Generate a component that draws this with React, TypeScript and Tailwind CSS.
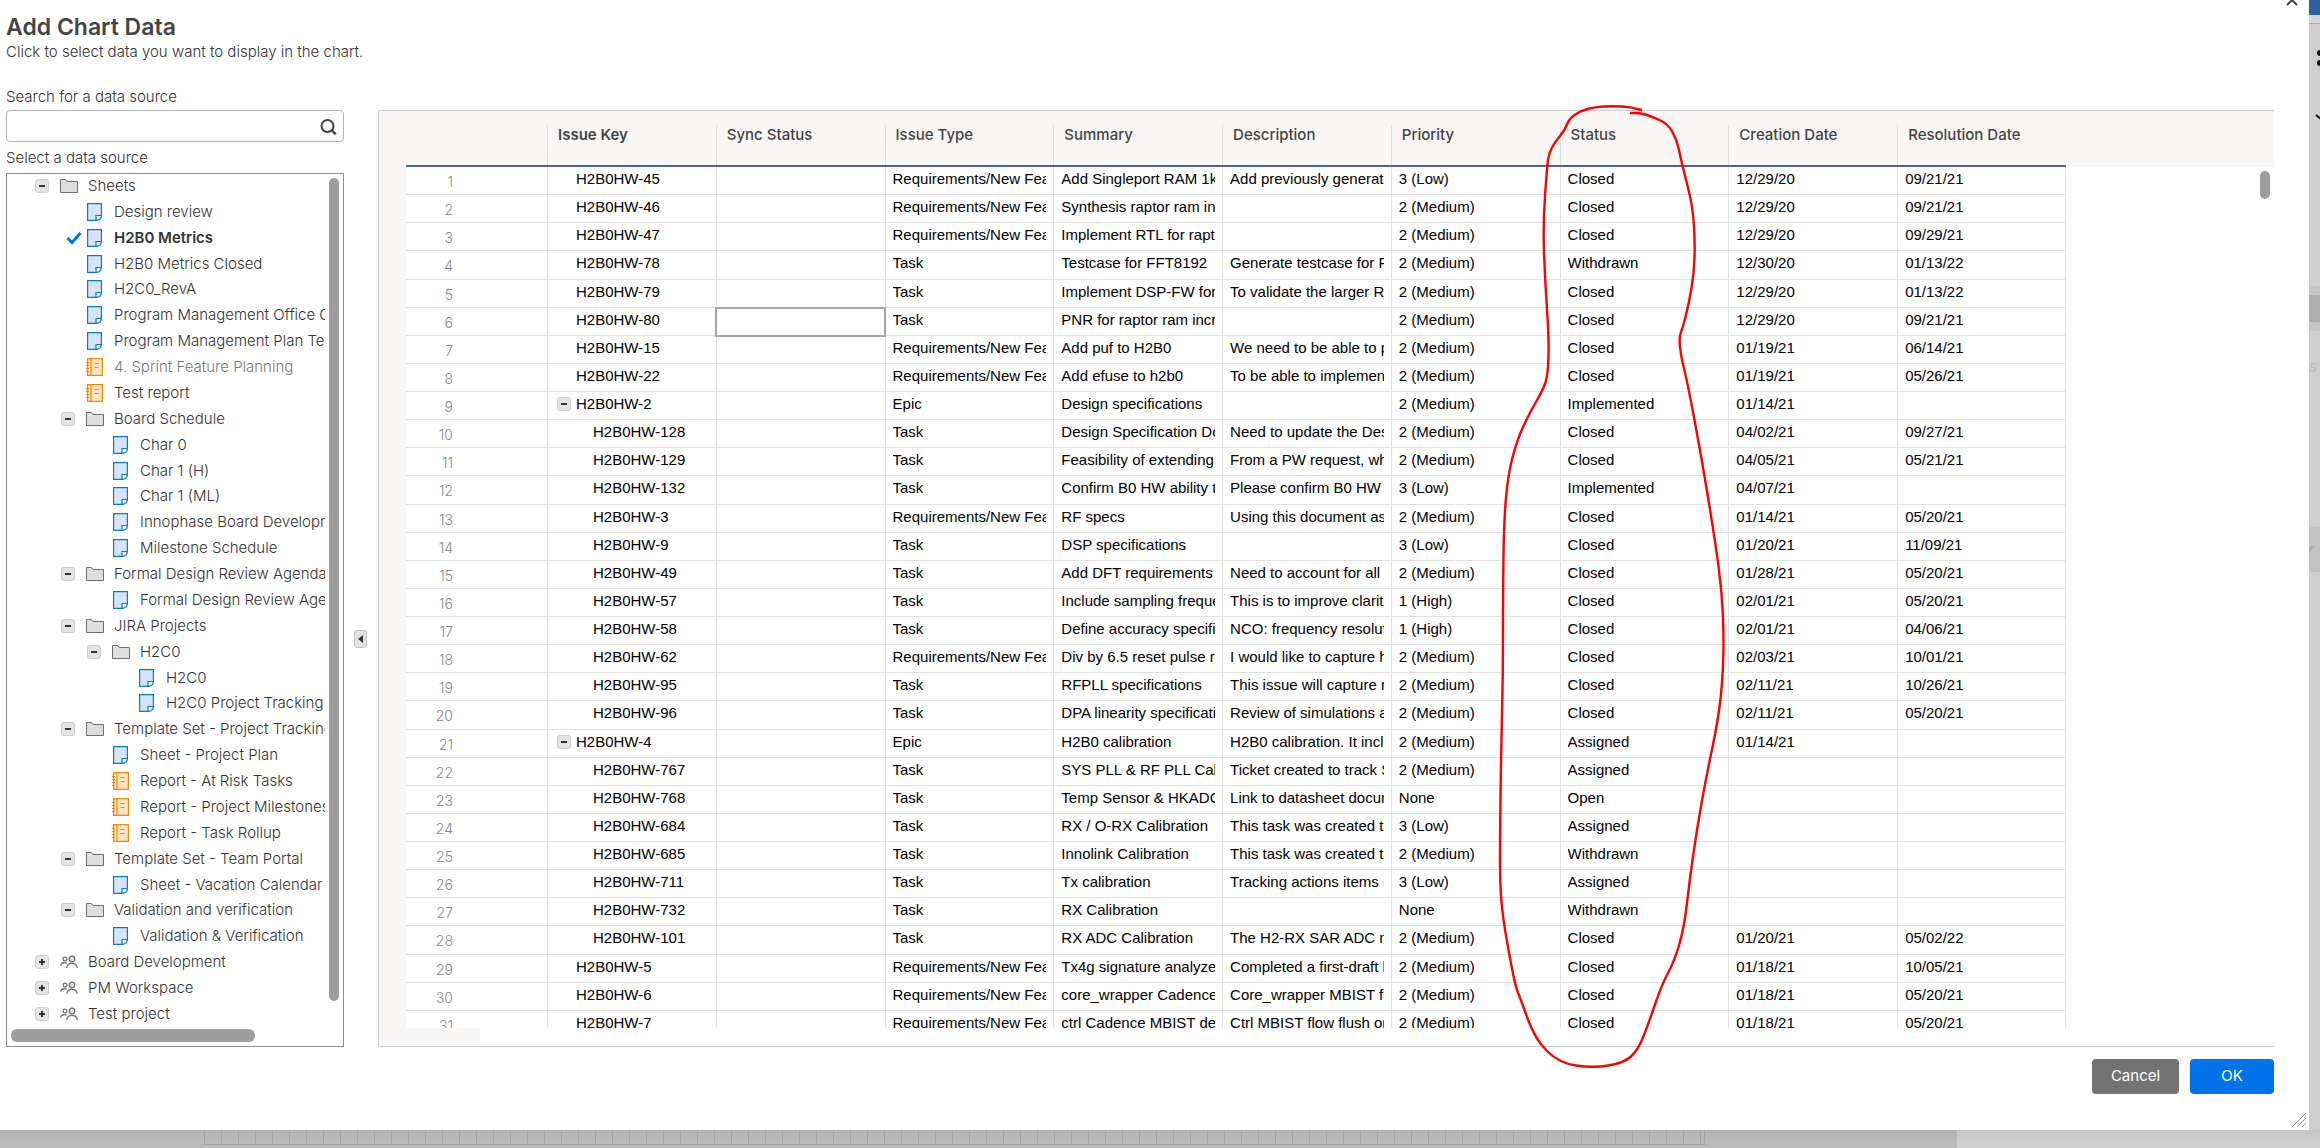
import { useState } from "react";

type Kind = "folder" | "sheet" | "report" | "workspace";

const TREE: { label: string; kind: Kind; level: number; muted?: boolean }[] = [
    { label: "Sheets", kind: "folder", level: 0 },
    { label: "Design review", kind: "sheet", level: 1 },
    { label: "H2B0 Metrics", kind: "sheet", level: 1 },
    { label: "H2B0 Metrics Closed", kind: "sheet", level: 1 },
    { label: "H2C0_RevA", kind: "sheet", level: 1 },
    { label: "Program Management Office C", kind: "sheet", level: 1 },
    { label: "Program Management Plan Tem", kind: "sheet", level: 1 },
    { label: "4. Sprint Feature Planning", kind: "report", level: 1, muted: true },
    { label: "Test report", kind: "report", level: 1 },
    { label: "Board Schedule", kind: "folder", level: 1 },
    { label: "Char 0", kind: "sheet", level: 2 },
    { label: "Char 1 (H)", kind: "sheet", level: 2 },
    { label: "Char 1 (ML)", kind: "sheet", level: 2 },
    { label: "Innophase Board Developm", kind: "sheet", level: 2 },
    { label: "Milestone Schedule", kind: "sheet", level: 2 },
    { label: "Formal Design Review Agenda", kind: "folder", level: 1 },
    { label: "Formal Design Review Agen", kind: "sheet", level: 2 },
    { label: "JIRA Projects", kind: "folder", level: 1 },
    { label: "H2C0", kind: "folder", level: 2 },
    { label: "H2C0", kind: "sheet", level: 3 },
    { label: "H2C0 Project Tracking", kind: "sheet", level: 3 },
    { label: "Template Set - Project Tracking", kind: "folder", level: 1 },
    { label: "Sheet - Project Plan", kind: "sheet", level: 2 },
    { label: "Report - At Risk Tasks", kind: "report", level: 2 },
    { label: "Report - Project Milestones", kind: "report", level: 2 },
    { label: "Report - Task Rollup", kind: "report", level: 2 },
    { label: "Template Set - Team Portal", kind: "folder", level: 1 },
    { label: "Sheet - Vacation Calendar", kind: "sheet", level: 2 },
    { label: "Validation and verification", kind: "folder", level: 1 },
    { label: "Validation & Verification", kind: "sheet", level: 2 },
    { label: "Board Development", kind: "workspace", level: 0 },
    { label: "PM Workspace", kind: "workspace", level: 0 },
    { label: "Test project", kind: "workspace", level: 0 },
];

const INDENT = ["pl-[28px]", "pl-[54px]", "pl-[80px]", "pl-[106px]"];

const COLUMNS = [
    "Issue Key",
    "Sync Status",
    "Issue Type",
    "Summary",
    "Description",
    "Priority",
    "Status",
    "Creation Date",
    "Resolution Date",
];

const REQ = "Requirements/New Feat";
const MED = "2 (Medium)";
const LOW = "3 (Low)";
const HIGH = "1 (High)";

// key, type, summary, description, priority, status, created, resolved
const ROWS = [
    ["H2B0HW-45", REQ, "Add Singleport RAM 1k", "Add previously generate", LOW, "Closed", "12/29/20", "09/21/21"],
    ["H2B0HW-46", REQ, "Synthesis raptor ram in", "", MED, "Closed", "12/29/20", "09/21/21"],
    ["H2B0HW-47", REQ, "Implement RTL for rapt", "", MED, "Closed", "12/29/20", "09/29/21"],
    ["H2B0HW-78", "Task", "Testcase for FFT8192", "Generate testcase for F", MED, "Withdrawn", "12/30/20", "01/13/22"],
    ["H2B0HW-79", "Task", "Implement DSP-FW for", "To validate the larger R", MED, "Closed", "12/29/20", "01/13/22"],
    ["H2B0HW-80", "Task", "PNR for raptor ram incr", "", MED, "Closed", "12/29/20", "09/21/21"],
    ["H2B0HW-15", REQ, "Add puf to H2B0", "We need to be able to p", MED, "Closed", "01/19/21", "06/14/21"],
    ["H2B0HW-22", REQ, "Add efuse to h2b0", "To be able to implemen", MED, "Closed", "01/19/21", "05/26/21"],
    ["H2B0HW-2", "Epic", "Design specifications", "", MED, "Implemented", "01/14/21", ""],
    ["H2B0HW-128", "Task", "Design Specification Do", "Need to update the Des", MED, "Closed", "04/02/21", "09/27/21"],
    ["H2B0HW-129", "Task", "Feasibility of extending", "From a PW request, wh", MED, "Closed", "04/05/21", "05/21/21"],
    ["H2B0HW-132", "Task", "Confirm B0 HW ability t", "Please confirm B0 HW", LOW, "Implemented", "04/07/21", ""],
    ["H2B0HW-3", REQ, "RF specs", "Using this document as", MED, "Closed", "01/14/21", "05/20/21"],
    ["H2B0HW-9", "Task", "DSP specifications", "", LOW, "Closed", "01/20/21", "11/09/21"],
    ["H2B0HW-49", "Task", "Add DFT requirements", "Need to account for all", MED, "Closed", "01/28/21", "05/20/21"],
    ["H2B0HW-57", "Task", "Include sampling freque", "This is to improve clarit", HIGH, "Closed", "02/01/21", "05/20/21"],
    ["H2B0HW-58", "Task", "Define accuracy specifi", "NCO: frequency resolut", HIGH, "Closed", "02/01/21", "04/06/21"],
    ["H2B0HW-62", REQ, "Div by 6.5 reset pulse r", "I would like to capture h", MED, "Closed", "02/03/21", "10/01/21"],
    ["H2B0HW-95", "Task", "RFPLL specifications", "This issue will capture r", MED, "Closed", "02/11/21", "10/26/21"],
    ["H2B0HW-96", "Task", "DPA linearity specificati", "Review of simulations a", MED, "Closed", "02/11/21", "05/20/21"],
    ["H2B0HW-4", "Epic", "H2B0 calibration", "H2B0 calibration. It incl", MED, "Assigned", "01/14/21", ""],
    ["H2B0HW-767", "Task", "SYS PLL & RF PLL Cal", "Ticket created to track S", MED, "Assigned", "", ""],
    ["H2B0HW-768", "Task", "Temp Sensor & HKADC", "Link to datasheet docum", "None", "Open", "", ""],
    ["H2B0HW-684", "Task", "RX / O-RX Calibration", "This task was created to", LOW, "Assigned", "", ""],
    ["H2B0HW-685", "Task", "Innolink Calibration", "This task was created to", MED, "Withdrawn", "", ""],
    ["H2B0HW-711", "Task", "Tx calibration", "Tracking actions items r", LOW, "Assigned", "", ""],
    ["H2B0HW-732", "Task", "RX Calibration", "", "None", "Withdrawn", "", ""],
    ["H2B0HW-101", "Task", "RX ADC Calibration", "The H2-RX SAR ADC n", MED, "Closed", "01/20/21", "05/02/22"],
    ["H2B0HW-5", REQ, "Tx4g signature analyze", "Completed a first-draft b", MED, "Closed", "01/18/21", "10/05/21"],
    ["H2B0HW-6", REQ, "core_wrapper Cadence", "Core_wrapper MBIST fl", MED, "Closed", "01/18/21", "05/20/21"],
    ["H2B0HW-7", REQ, "ctrl Cadence MBIST de", "Ctrl MBIST flow flush on", MED, "Closed", "01/18/21", "05/20/21"],
];

// freehand loop drawn round the Status column
const MARK: [number, number][] = [
    [1641, 110], [1632, 107], [1612, 106], [1595, 107], [1580, 111], [1569, 119], [1565, 130], [1555, 142],
    [1549, 153], [1547, 167], [1543, 225], [1545, 280], [1549, 338], [1548, 375], [1543, 390], [1530, 412],
    [1517, 440], [1508, 475], [1504, 520], [1503, 592], [1503, 674], [1501, 757], [1500, 840], [1500, 884],
    [1503, 919], [1511, 964], [1516, 988], [1521, 1000], [1535, 1039], [1559, 1063], [1593, 1068], [1624, 1063],
    [1638, 1050], [1648, 1025], [1662, 984], [1674, 962], [1684, 929], [1690, 877], [1697, 829], [1706, 778],
    [1717, 726], [1722, 688], [1724, 643], [1722, 592], [1715, 540], [1702, 460], [1687, 380], [1681, 357],
    [1679, 337], [1683, 327], [1689, 303], [1694, 273], [1695, 243], [1693, 210], [1687, 183], [1681, 160],
    [1677, 140], [1668, 124], [1653, 117], [1641, 113], [1631, 113],
];

function smoothPath(pts: [number, number][]) {
    let d = `M${pts[0][0]} ${pts[0][1]}`;
    for (let i = 1; i < pts.length - 1; i++) {
        const mx = (pts[i][0] + pts[i + 1][0]) / 2;
        const my = (pts[i][1] + pts[i + 1][1]) / 2;
        d += `Q${pts[i][0]} ${pts[i][1]} ${mx} ${my}`;
    }
    const last = pts[pts.length - 1];
    return d + `L${last[0]} ${last[1]}`;
}

function FolderIcon() {
    return (
        <svg width="18" height="16" viewBox="0 0 18 16" fill="#dedede" stroke="#6e6e6e">
            <path d="M.5 14.5V1.5h5l1.5 2h10.5v11z" />
        </svg>
    );
}

function SheetIcon() {
    return (
        <svg width="16" height="18" viewBox="0 0 16 18" fill="#d6e4fb" stroke="#0a7bc4" strokeWidth="1.2">
            <path d="M1.6.6h13.8v12.2l-4.6 4.6H1.6z" />
            <path d="M10 17.3v-4.8h5.3c0 3-2.3 4.8-5.3 4.8z" fill="#fff" />
        </svg>
    );
}

function ReportIcon() {
    return (
        <svg width="17" height="18" viewBox="0 0 17 18" fill="#ffe3bf" stroke="#f08a00" strokeWidth="1.2">
            <path d="M1.6.6h14.8v16.8H1.6z" />
            <path d="M5 .6v16.8M0 4.5h3M0 7.5h3M0 10.5h3M0 13.5h3M8.5 5.5h4M8.5 9.5h4" />
        </svg>
    );
}

function WorkspaceIcon() {
    return (
        <svg width="18" height="14" viewBox="0 0 18 14" fill="none" stroke="#6e6e6e" strokeWidth="1.2">
            <circle cx="12" cy="4" r="2.8" fill="#dedede" />
            <circle cx="5" cy="4" r="1.9" />
            <path d="M6.8 13c.3-3 2.4-4.6 5.1-4.6s4.9 1.6 5.4 4.6M.6 10.6c.4-1.9 1.9-3 3.9-3 .9 0 1.6.2 2.3.7" />
        </svg>
    );
}

function TreeIcon({ kind }: { kind: Kind }) {
    if (kind === "folder") return <FolderIcon />;
    if (kind === "sheet") return <SheetIcon />;
    if (kind === "report") return <ReportIcon />;
    return <WorkspaceIcon />;
}

function Toggle({ open, name }: { open: boolean; name: string }) {
    return (
        <button
            type="button"
            aria-label={(open ? "Collapse " : "Expand ") + name}
            className="w-3.5 h-3.5 shrink-0 rounded-[3px] border border-[#cfcfcf] bg-[#e4e4e4] flex items-center justify-center"
        >
            <svg width="8" height="8" viewBox="0 0 8 8" stroke="#333" strokeWidth="2" className="shrink-0">
                <path d={open ? "M1 4h6" : "M1 4h6M4 1v6"} />
            </svg>
        </button>
    );
}

function SourceTree() {
    const [selected, setSelected] = useState(2);

    return (
        <div className="relative mt-[5px] flex-1 min-h-0 border border-[#8f8f8f] overflow-hidden">
            <ul className="-mt-px h-[854px] mr-[18px] flex flex-col overflow-hidden">
                {TREE.map((item, i) => {
                    const branch = item.kind === "folder" || item.kind === "workspace";
                    return (
                        <li key={i} className={"flex-1 min-h-0 flex items-center whitespace-nowrap " + INDENT[item.level]}>
                            <span className="w-[25px] shrink-0 flex items-center">
                                {branch && <Toggle open={item.kind === "folder"} name={item.label} />}
                                {!branch && i === selected && (
                                    <svg width="16" height="14" viewBox="0 0 16 14" fill="none" stroke="#0073ea" strokeWidth="3" className="ml-[5px]">
                                        <path d="M1.5 7l4.5 4.5L14.5 2" />
                                    </svg>
                                )}
                            </span>
                            <span className="w-7 shrink-0">
                                <TreeIcon kind={item.kind} />
                            </span>
                            <button
                                type="button"
                                onClick={() => setSelected(i)}
                                className={
                                    "leading-5 " +
                                    (i === selected ? "font-semibold" : "font-light") +
                                    (item.muted ? " text-[#777]" : " text-[#333]")
                                }
                            >
                                {item.label}
                            </button>
                        </li>
                    );
                })}
            </ul>
            <div className="absolute top-1 right-1 w-2.5 h-[823px] rounded-full bg-[#9e9e9e]" />
            <div className="absolute bottom-1 left-1 w-[244px] h-[13px] rounded-md bg-[#9e9e9e]" />
        </div>
    );
}

function IssueKey({ name, index }: { name: string; index: number }) {
    if (index === 8 || index === 20) {
        return (
            <div className="pl-[9px] flex items-center gap-[5px]">
                <Toggle open name={name} />
                {name}
            </div>
        );
    }
    const child = (index > 8 && index < 20) || (index > 20 && index < 28);
    return <div className={child ? "pl-[45px]" : "pl-[28px]"}>{name}</div>;
}

function SheetGrid() {
    const cell = "p-0 pt-[2px] align-top border-l border-b border-[#e0e0e0] leading-5";

    return (
        <div className="mt-[23px] flex-1 min-w-0 flex border border-r-0 border-[#ccc]">
            <div className="w-[27px] shrink-0 bg-[#f8f7f6]" />
            <div className="flex-1 min-w-0 flex flex-col">
                <div className="flex-1 min-h-0 flex items-start overflow-hidden">
                    <table className="w-[1660px] h-[928px] shrink-0 table-fixed border-separate border-spacing-0">
                        <thead>
                            <tr className="h-14 bg-[#f8f7f6]">
                                <th aria-label="Row" className="w-[141px] p-0 border-b-2 border-[#4a64a5]" />
                                {COLUMNS.map((name, i) => (
                                    <th
                                        key={name}
                                        className={
                                            "p-0 pt-[14px] align-top border-b-2 border-[#4a64a5] text-left " +
                                            (i === 0 ? "font-semibold" : "font-medium")
                                        }
                                    >
                                        <div className="h-10 border-l border-[#e0e0e0] pl-[10px] leading-5">{name}</div>
                                    </th>
                                ))}
                            </tr>
                        </thead>
                        <tbody className="font-['Liberation_Sans',Arial,sans-serif] text-black">
                            {ROWS.map(([key, ...rest], i) => (
                                <tr key={key} className="h-7">
                                    <td className="p-0 pt-[5px] pr-[94px] align-top text-right leading-5 border-b border-[#e0e0e0] font-['Inter',sans-serif] font-light text-sm text-[#888]">
                                        {i + 1}
                                    </td>
                                    <td className={cell}>
                                        <IssueKey name={key} index={i} />
                                    </td>
                                    <td className={cell + (i === 5 ? " outline-2 -outline-offset-1 outline-[#a5a5a5]" : "")} />
                                    {rest.map((text, c) => (
                                        <td key={c} className={cell + (c === 6 ? " border-r" : "")}>
                                            <div className="ml-[7px] mr-[7px] overflow-hidden whitespace-nowrap">{text}</div>
                                        </td>
                                    ))}
                                </tr>
                            ))}
                        </tbody>
                    </table>
                    <div className="flex-1 flex flex-col items-end">
                        <div className="w-full h-14 bg-[#f8f7f6]" />
                        <div className="mt-1 mr-1 w-2.5 h-7 rounded-full bg-[#9e9e9e]" />
                    </div>
                </div>
                <div className="w-[74px] h-[18px] bg-[#f8f7f6]" />
            </div>
        </div>
    );
}

// slice of the dimmed dashboard that shows to the right of the dialog
function BackdropEdge() {
    return (
        <div className="w-[11px] shrink-0 overflow-hidden flex flex-col bg-[#cecece]">
            <div className="h-[15px] bg-[#2d609f]" />
            <div className="h-[9px] bg-[#d6d6d6] border-b border-[#aaa]" />
            <svg width="11" height="262" viewBox="0 0 11 262" className="shrink-0">
                <circle cx="11" cy="29" r="3" fill="#111" />
                <circle cx="11" cy="39" r="3" fill="#111" />
                <path d="M7 91l5 4" stroke="#111" strokeWidth="2" />
            </svg>
            <div className="h-[9px] bg-[#c5c5c5]" />
            <div className="h-[27px] bg-[#aeaeae]" />
            <div className="h-[9px] bg-[#c5c5c5]" />
            <div className="h-[196px] pt-[26px] leading-5 text-[#bdbdbd]">s</div>
            <div className="h-[45px] bg-[#c2c2c2] pt-[19px]">
                <svg width="11" height="7" viewBox="0 0 11 7" fill="#adadad">
                    <path d="M0 0h5L0 7z" />
                </svg>
            </div>
        </div>
    );
}

function BackdropBottom() {
    return (
        <div className="h-[18px] shrink-0 flex bg-linear-to-b from-[#b2b2b2] to-[#bcbcbc]">
            <div className="w-[204px] shrink-0" />
            <div className="w-[1501px] h-[15px] border-r border-b border-[#a3a3a3] bg-[repeating-linear-gradient(90deg,#a5a5a5_0_1px,transparent_1px_17px)]" />
            <div className="w-[252px]" />
            <div className="flex-1 bg-linear-to-b from-[#c6c6c6] to-[#d2d2d2]" />
        </div>
    );
}

export default function App() {
    const [query, setQuery] = useState("");

    return (
        <div className="relative h-screen overflow-hidden flex flex-col font-['Inter',sans-serif] text-[15px] text-[#444]">
            <div className="flex-1 min-h-0 flex">
                <div className="relative flex-1 min-w-0 flex flex-col bg-white pl-[6px] pr-[35px]">
                    <button type="button" aria-label="Close" className="absolute -top-[6px] right-[11px]">
                        <svg width="12" height="12" viewBox="0 0 12 12" stroke="#444" strokeWidth="2">
                            <path d="M1 1l10 10M11 1L1 11" />
                        </svg>
                    </button>

                    <header className="pt-3 pb-[25px]">
                        <h1 className="text-[23px] leading-[30px] font-semibold">Add Chart Data</h1>
                        <p className="leading-5 font-light text-[#333]">Click to select data you want to display in the chart.</p>
                    </header>

                    <main className="flex-1 min-h-0 flex">
                        <section className="w-[338px] shrink-0 flex flex-col">
                            <label htmlFor="source-search" className="leading-5 font-light text-[#333]">
                                Search for a data source
                            </label>
                            <div className="mt-[3px] h-8 border border-[#b5b5b5] rounded-sm flex items-center pr-[6px]">
                                <input
                                    id="source-search"
                                    type="text"
                                    value={query}
                                    onChange={(e) => setQuery(e.target.value)}
                                    className="flex-1 min-w-0 h-full px-2 focus:outline-none"
                                />
                                <svg width="17" height="17" viewBox="0 0 17 17" fill="none" stroke="#444" strokeWidth="2">
                                    <circle cx="7.5" cy="8" r="6" />
                                    <path d="M11.8 12.3l4 4" strokeWidth="2.4" />
                                </svg>
                            </div>
                            <h2 className="mt-[6px] leading-5 font-light text-[#333]">Select a data source</h2>
                            <SourceTree />
                        </section>

                        <button
                            type="button"
                            aria-label="Collapse data sources"
                            className="mt-[543px] ml-[10px] mr-[11px] w-[13px] h-[18px] shrink-0 rounded-[3px] border border-[#c4c4c4] bg-[#e2e2e2] flex items-center justify-center"
                        >
                            <svg width="5" height="8" viewBox="0 0 5 8" fill="#333" className="shrink-0">
                                <path d="M5 0v8L0 4z" />
                            </svg>
                        </button>

                        <SheetGrid />
                    </main>

                    <footer className="pt-3 pb-9 flex justify-end gap-[11px] text-white">
                        <button type="button" className="w-[87px] h-[35px] rounded-sm bg-[#737373]">
                            Cancel
                        </button>
                        <button type="button" className="w-[84px] h-[35px] rounded-sm bg-[#0073ea]">
                            OK
                        </button>
                    </footer>

                    <svg width="14" height="14" viewBox="0 0 14 14" stroke="#999" className="absolute bottom-[3px] right-[3px]">
                        <path d="M0 14L14 0M5 14l9-9M10 14l4-4" />
                    </svg>
                </div>
                <BackdropEdge />
            </div>
            <BackdropBottom />

            <svg width="2320" height="1148" fill="none" className="absolute top-0 left-0 pointer-events-none">
                <path d={smoothPath(MARK)} stroke="#f00" strokeWidth="2.4" strokeLinecap="round" />
            </svg>
        </div>
    );
}
